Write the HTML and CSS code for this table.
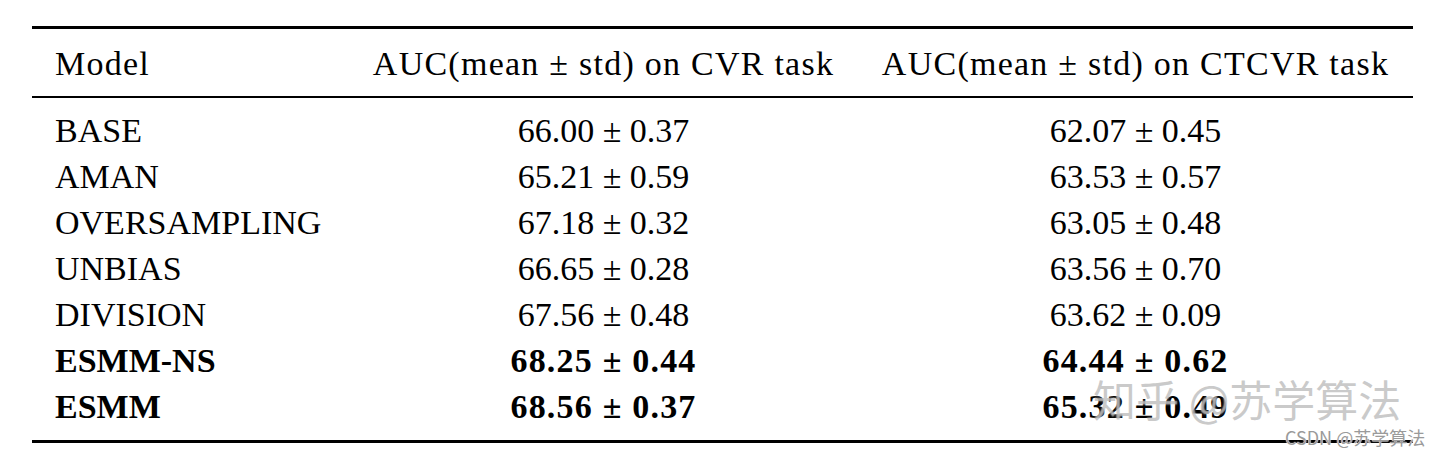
FILE: index.html
```html
<!DOCTYPE html>
<html lang="en">
<head>
    <meta charset="UTF-8">
    <meta name="viewport" content="width=device-width, initial-scale=1.0">
    <title>ESMM - AUC results</title>
    <link rel="stylesheet" href="styles.css">
</head>
<body>
    <div class="page">
        <table class="results">
            <colgroup>
                <col class="col-model">
                <col class="col-cvr">
                <col class="col-ctcvr">
            </colgroup>
            <thead>
                <tr>
                    <th class="name">Model</th>
                    <th>AUC(mean ± std) on CVR task</th>
                    <th>AUC(mean ± std) on CTCVR task</th>
                </tr>
            </thead>
            <tbody>
                <tr class="first">
                    <td class="name">BASE</td>
                    <td>66.00 ± 0.37</td>
                    <td>62.07 ± 0.45</td>
                </tr>
                <tr>
                    <td class="name">AMAN</td>
                    <td>65.21 ± 0.59</td>
                    <td>63.53 ± 0.57</td>
                </tr>
                <tr>
                    <td class="name">OVERSAMPLING</td>
                    <td>67.18 ± 0.32</td>
                    <td>63.05 ± 0.48</td>
                </tr>
                <tr>
                    <td class="name">UNBIAS</td>
                    <td>66.65 ± 0.28</td>
                    <td>63.56 ± 0.70</td>
                </tr>
                <tr>
                    <td class="name">DIVISION</td>
                    <td>67.56 ± 0.48</td>
                    <td>63.62 ± 0.09</td>
                </tr>
                <tr class="best">
                    <td class="name">ESMM-NS</td>
                    <td>68.25 ± 0.44</td>
                    <td>64.44 ± 0.62</td>
                </tr>
                <tr class="best last">
                    <td class="name">ESMM</td>
                    <td>68.56 ± 0.37</td>
                    <td>65.32 ± 0.49</td>
                </tr>
            </tbody>
        </table>

        <div class="mark-zhihu">知乎 @苏学算法</div>
        <div class="mark-csdn">CSDN @苏学算法</div>
    </div>
</body>
</html>
```

FILE: styles.css
```css
body {
    margin: 0;
    background: #ffffff;
    color: #000000;
    font-family: "Liberation Serif", "Times New Roman", serif;
}
.page {
    position: relative;
    width: 1440px;
    height: 456px;
    padding-top: 26px;
    box-sizing: border-box;
}
.results {
    margin-left: 32px;
    width: 1381px;
    table-layout: fixed;
    border-collapse: collapse;
    border-top: 3px solid #000;
    border-bottom: 3px solid #000;
    font-size: 34px;
    line-height: 46px;
}
.col-model { width: 317px; }
.col-cvr { width: 509px; }
.col-ctcvr { width: 555px; }

.results th,
.results td {
    padding: 0;
    text-align: center;
    white-space: nowrap;
    font-weight: normal;
}
.results th {
    padding-top: 12px;
    padding-bottom: 9px;
    border-bottom: 2px solid #000;
    letter-spacing: 1.25px;
}
.results .name {
    text-align: left;
    padding-left: 23px;
}
.results tr.first td {
    padding-top: 10px;
}
.results tr.last td {
    padding-bottom: 10px;
}
.results tr.best td {
    font-weight: bold;
}
.results tr.best td:not(.name) {
    letter-spacing: 1.2px;
}

/* watermarks */
.mark-zhihu {
    position: absolute;
    left: 1093px;
    top: 372px;
    font-family: "Noto Sans CJK SC", "Noto Sans", sans-serif;
    font-size: 43px;
    line-height: 52px;
    color: rgba(150, 150, 150, 0.5);
    text-shadow: 0 0 2px rgba(255, 255, 255, 0.8);
    white-space: nowrap;
}
.mark-csdn {
    position: absolute;
    left: 1285px;
    top: 426px;
    font-family: "Noto Sans CJK SC", "Noto Sans", sans-serif;
    font-size: 18px;
    line-height: 22px;
    color: #9a9a9a;
    text-shadow: 0 0 1px #fff, 0 0 1px #fff;
    white-space: nowrap;
}
```
